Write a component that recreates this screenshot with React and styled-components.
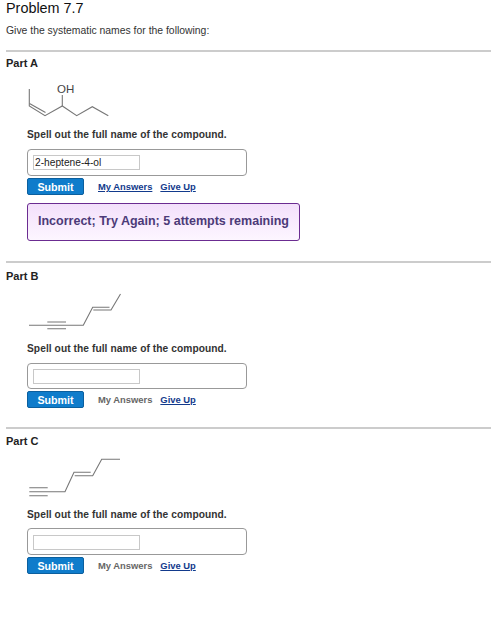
import React from "react";
import styled, { createGlobalStyle } from "styled-components";

const Global = createGlobalStyle`
  html, body { margin: 0; padding: 0; background: #fff; }
  body { font-family: "Liberation Sans", Arial, sans-serif; color: #222; }
`;
const Page = styled.div`
  width: 491px;
  height: 631px;
  overflow: hidden;
`;
const Header = styled.header`
  padding: 1px 0 0 6px;
  height: 49px;
`;
const Title = styled.h1`
  margin: 0;
  font-size: 14.4px;
  line-height: 15px;
  font-weight: 400;
  color: #111;
`;
const Intro = styled.p`
  margin: 7px 0 0;
  font-size: 10.4px;
  line-height: 15px;
  color: #333;
`;
const Part = styled.section`
  margin-left: 6px;
  border-top: 2px solid #ccc;
  height: ${(p) => p.$height}px;
  box-sizing: content-box;
`;
const PartLabel = styled.h2`
  margin: 0;
  padding-top: ${(p) => p.$top}px;
  font-size: 11px;
  line-height: 14px;
  font-weight: 700;
  color: #222;
`;
const Body = styled.div`
  margin-left: 21px;
  width: 290px;
`;
const Molecule = styled.svg`
  display: block;
  margin-top: ${(p) => p.$top}px;
`;
const Prompt = styled.p`
  margin: ${(p) => p.$top}px 0 0;
  font-size: 10.2px;
  line-height: 14px;
  font-weight: 700;
  letter-spacing: 0.07px;
  color: #333;
`;
const AnswerBox = styled.div`
  box-sizing: border-box;
  margin-top: ${(p) => p.$gap}px;
  width: 220px;
  height: ${(p) => p.$height}px;
  border: 1px solid #999;
  border-radius: 4px;
  padding-top: ${(p) => p.$pad}px;
  padding-left: 5px;
`;
const Field = styled.div`
  box-sizing: border-box;
  width: 107px;
  height: 15px;
  border: 1px solid #c8c8c8;
  background: #fff;
  padding-left: 1px;
  font-size: 10.2px;
  line-height: 13px;
  color: #222;
`;
const Actions = styled.div`
  display: flex;
  align-items: center;
  margin-top: 2px;
  height: 17px;
`;
const SubmitButton = styled.button`
  box-sizing: border-box;
  width: 57px;
  height: 17px;
  padding: 0;
  border: 1px solid #0b5f9e;
  border-radius: 2px;
  background: #0f7ccb;
  color: #fff;
  font-family: inherit;
  font-size: 10.7px;
  font-weight: 700;
  line-height: 14px;
  margin-right: 14px;
`;
const ActionLink = styled.span`
  font-size: 9.4px;
  font-weight: 700;
  margin-right: 8px;
  color: ${(p) => (p.$disabled ? "#666" : "#123a8c")};
  text-decoration: ${(p) => (p.$disabled ? "none" : "underline")};
`;
const Alert = styled.div`
  box-sizing: border-box;
  margin-top: 8px;
  width: 273px;
  height: 38px;
  border: 1px solid #6b2c91;
  border-radius: 3px;
  background: linear-gradient(#f3e0fb, #fdf6ff);
  padding-left: 10px;
  font-size: 12.5px;
  font-weight: 700;
  line-height: 34px;
  white-space: nowrap;
  color: #4c3a78;
`;

const Stroke = ({ d, w = 1.1 }) => (
  <path d={d} fill="none" stroke="#777" strokeWidth={w} />
);

const MoleculeA = () => (
  <Molecule $top={12} width="90" height="38" viewBox="27 82 90 38">
    <Stroke d="M29.300 89V106L45 115.700L62.300 106L76.700 115.700L92.300 106.700L108.300 115.700" />
    <Stroke d="M62.300 95V106" />
    <Stroke d="M29.500 103.500L45.500 112.500" />
    <text x="57" y="93" fontFamily="Liberation Sans" fontSize="11.500" fill="#444">OH</text>
  </Molecule>
);
const MoleculeB = () => (
  <Molecule $top={9} width="100" height="40" viewBox="27 292 100 40">
    <Stroke d="M29 325.300H83.300L92.700 307.300H109.500" />
    <Stroke d="M47.300 322H66M47.300 328.700H66" />
    <Stroke d="M93.300 310H111L120.500 294" />
  </Molecule>
);
const MoleculeC = () => (
  <Molecule $top={10} width="100" height="40" viewBox="27 458 100 40">
    <Stroke d="M29.300 491.700H65L74 472.300H90.700" />
    <Stroke d="M29.300 487.700H47.700M29.300 495.700H47.700" />
    <Stroke d="M74.700 475.700H92.700L101.700 459.300H120" />
  </Molecule>
);

const Controls = ({ value, boxHeight, pad, gap, linked }) => (
  <>
    <AnswerBox $height={boxHeight} $pad={pad} $gap={gap}>
      <Field>{value}</Field>
    </AnswerBox>
    <Actions>
      <SubmitButton>Submit</SubmitButton>
      <ActionLink $disabled={!linked}>My Answers</ActionLink>
      <ActionLink>Give Up</ActionLink>
    </Actions>
  </>
);

export default function App() {
  return (
    <Page>
      <Global />
      <Header>
        <Title>Problem 7.7</Title>
        <Intro>Give the systematic names for the following:</Intro>
      </Header>
      <Part $height={209}>
        <PartLabel $top={4}>Part A</PartLabel>
        <Body>
          <MoleculeA />
          <Prompt $top={8}>Spell out the full name of the compound.</Prompt>
          <Controls value="2-heptene-4-ol" boxHeight={27} pad={5} gap={7} linked />
          <Alert>Incorrect; Try Again; 5 attempts remaining</Alert>
        </Body>
      </Part>
      <Part $height={164}>
        <PartLabel $top={6}>Part B</PartLabel>
        <Body>
          <MoleculeB />
          <Prompt $top={10}>Spell out the full name of the compound.</Prompt>
          <Controls boxHeight={26} pad={5} gap={7} />
        </Body>
      </Part>
      <Part $height={200}>
        <PartLabel $top={5}>Part C</PartLabel>
        <Body>
          <MoleculeC />
          <Prompt $top={10}>Spell out the full name of the compound.</Prompt>
          <Controls boxHeight={27} pad={6} gap={6} />
        </Body>
      </Part>
    </Page>
  );
}
